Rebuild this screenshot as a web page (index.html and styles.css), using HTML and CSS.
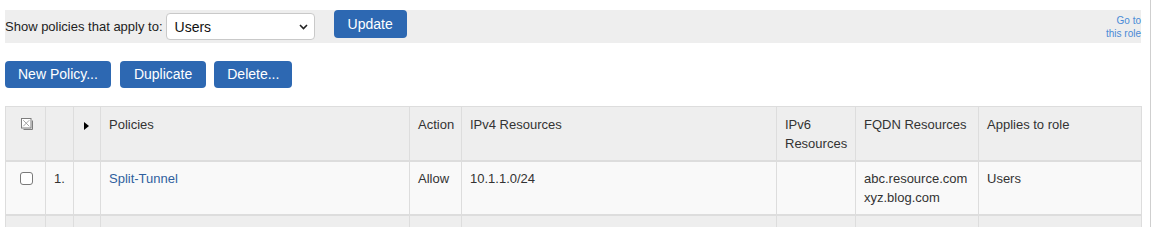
FILE: index.html
```html
<!DOCTYPE html>
<html>
<head>
<meta charset="utf-8">
<link rel="stylesheet" href="styles.css">
</head>
<body>
<div class="page">
  <div class="toolbar">
    <span class="label">Show policies that apply to:</span>
    <div class="select">
      <span>Users</span>
      <svg class="chev" width="9" height="6" viewBox="0 0 9 6"><path d="M1 1 L4.5 4.5 L8 1" fill="none" stroke="#222" stroke-width="1.6"/></svg>
    </div>
    <button class="btn update">Update</button>
    <a class="goto" href="#">Go to<br>this role</a>
  </div>

  <div class="actions">
    <button class="btn">New Policy...</button>
    <button class="btn">Duplicate</button>
    <button class="btn">Delete...</button>
  </div>

  <table class="grid">
    <colgroup>
      <col class="c-chk"><col class="c-num"><col class="c-arr"><col class="c-pol"><col class="c-act"><col class="c-v4"><col class="c-v6"><col class="c-fq"><col class="c-role">
    </colgroup>
    <thead>
      <tr>
        <th class="center"><svg class="selall" width="13" height="13" viewBox="0 0 13 13"><rect x="0.5" y="0.5" width="9.5" height="9.5" fill="#fff" stroke="#7d7d7d"/><path d="M11.5 2.5 V11.5 H2.5" fill="none" stroke="#7d7d7d"/><path d="M2.2 2.2 L8.3 8.3 M8.3 2.2 L2.2 8.3" stroke="#9a9a9a" stroke-width="0.9"/></svg></th>
        <th></th>
        <th class="center"><span class="tri"></span></th>
        <th>Policies</th>
        <th>Action</th>
        <th>IPv4 Resources</th>
        <th>IPv6<br>Resources</th>
        <th>FQDN Resources</th>
        <th>Applies to role</th>
      </tr>
    </thead>
    <tbody>
      <tr class="odd">
        <td class="center"><span class="chk"></span></td>
        <td>1.</td>
        <td></td>
        <td><a class="link" href="#">Split-Tunnel</a></td>
        <td>Allow</td>
        <td>10.1.1.0/24</td>
        <td></td>
        <td>abc.resource.com<br>xyz.blog.com</td>
        <td>Users</td>
      </tr>
      <tr class="even">
        <td>&nbsp;</td><td></td><td></td><td></td><td></td><td></td><td></td><td></td><td></td>
      </tr>
    </tbody>
  </table>
</div>
</body>
</html>
```

FILE: styles.css
```css
html, body {
  margin: 0;
  padding: 0;
  background: #fff;
  overflow: hidden;
}
body {
  font-family: "Liberation Sans", Arial, Helvetica, sans-serif;
  color: #222;
}
.page {
  width: 1151px;
  height: 227px;
  overflow: hidden;
  box-sizing: border-box;
  border-right: 1px solid #cfcfcf;
  padding: 10px 0 0 5px;
}
.toolbar {
  display: flex;
  align-items: flex-start;
  width: 1136px;
  height: 33px;
  background: #eeeeee;
}
.label {
  font-size: 13px;
  line-height: 27px;
  margin-top: 3px;
  color: #222;
}
.select {
  margin-top: 3px;
  margin-left: 3px;
  width: 149px;
  height: 27px;
  box-sizing: border-box;
  border: 1px solid #c9c9c9;
  border-radius: 4px;
  background: #fff;
  display: flex;
  align-items: center;
  justify-content: space-between;
  padding: 0 6px 0 8px;
  font-size: 14px;
  color: #111;
}
.chev { margin-top: 1px; }
.btn {
  font-family: "Liberation Sans", Arial, Helvetica, sans-serif;
  font-size: 14px;
  color: #fff;
  background: #2d68b2;
  border: none;
  border-radius: 4px;
  height: 28px;
  padding: 0 13px;
  margin: 0;
  line-height: 28px;
  cursor: pointer;
}
.update {
  margin-left: 19px;
  padding: 0 14px 2px;
}
.goto {
  margin-left: auto;
  margin-top: 4px;
  font-size: 10px;
  line-height: 13px;
  text-align: right;
  color: #4a8ad6;
  text-decoration: none;
}
.actions {
  display: flex;
  gap: 9px;
  margin-top: 18px;
}
.actions .btn { height: 27px; line-height: 27px; }
.actions .btn:nth-child(2) { padding: 0 14px; }
.actions .btn:nth-child(3) { margin-left: -1px; }

.grid {
  margin-top: 18px;
  width: 1136px;
  table-layout: fixed;
  border-collapse: collapse;
  font-size: 13px;
  color: #333;
}
.c-chk { width: 40px; }
.c-num { width: 28px; }
.c-arr { width: 27px; }
.c-pol { width: 309px; }
.c-act { width: 52px; }
.c-v4 { width: 315px; }
.c-v6 { width: 79px; }
.c-fq { width: 123px; }
.c-role { width: 163px; }

.grid th, .grid td {
  border: 1px solid #dddddd;
  padding: 8px 8px;
  line-height: 19px;
  vertical-align: top;
  text-align: left;
  font-weight: normal;
}
.grid thead th {
  background: #eeeeee;
  border-bottom: 2px solid #dddddd;
  padding-bottom: 7px;
}
.grid tr.odd td { background: #f9f9f9; border-bottom: 2px solid #dddddd; padding-top: 7px; padding-bottom: 7px; }
.grid tr.even td { background: #eeeeee; }
.grid .center { text-align: center; padding-left: 0; padding-right: 0; }
.selall { display: inline-block; vertical-align: -2px; margin-left: 3px; }
.tri {
  display: inline-block;
  width: 0;
  height: 0;
  border-top: 4.5px solid transparent;
  border-bottom: 4.5px solid transparent;
  border-left: 5px solid #000;
  vertical-align: -1px;
  margin-left: -1px;
}
.chk {
  display: inline-block;
  width: 13px;
  height: 13px;
  box-sizing: border-box;
  border: 1px solid #7a7a7a;
  border-radius: 3px;
  background: #fff;
  vertical-align: -2px;
  margin-left: 1px;
}
.link {
  color: #2f5f9e;
  text-decoration: none;
}
```
